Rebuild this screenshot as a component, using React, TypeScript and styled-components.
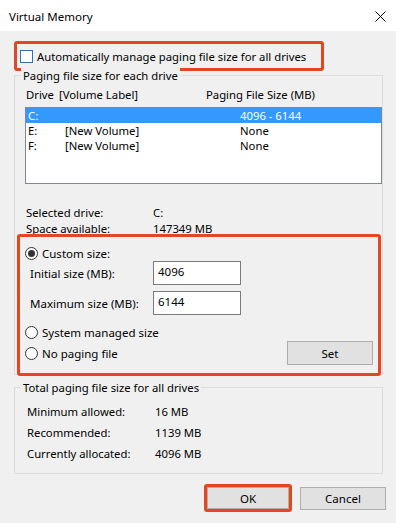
import * as React from "react";
import styled, { createGlobalStyle } from "styled-components";

const colors = {
	face: "#f0f0f0",
	frame: "#dcdcdc",
	orange: "#e4471d",
	select: "#3399ff",
	edge: "#7a7a7a",
	list: "#828790",
	button: "#e1e1e1",
	buttonEdge: "#adadad",
	check: "#2f6fb8",
};

const Global = createGlobalStyle`
	html, body {
		margin: 0;
		padding: 0;
	}
	body {
		background: ${colors.face};
		font-family: "Noto Sans", "Open Sans", sans-serif;
		font-size: 11.3px;
		color: #000;
	}
`;

const Window = styled.div`
	width: 396px;
	height: 523px;
	background: ${colors.face};
	display: flex;
	flex-direction: column;
	overflow: hidden;
`;

const TitleBar = styled.div`
	height: 31px;
	box-sizing: border-box;
	padding: 2px 10px 0 9px;
	background: #fff;
	display: flex;
	align-items: center;
	justify-content: space-between;
	font-size: 11.5px;
`;

const Body = styled.div`
	display: flex;
	flex-direction: column;
	padding: 0 13px 0 14px;
`;

const Highlight = styled.div`
	box-sizing: border-box;
	border: 3px solid ${colors.orange};
	border-radius: 3px;
`;

const AutoBox = styled(Highlight)`
	width: 310px;
	height: 30px;
	margin-top: 10px;
	padding-left: 3px;
	display: flex;
	align-items: center;
	white-space: nowrap;
`;

const Check = styled.span`
	width: 13px;
	height: 13px;
	box-sizing: border-box;
	border: 1px solid ${colors.check};
	background: #fff;
	margin-right: 4px;
	flex-shrink: 0;
`;

const Group = styled.div<{ $top: number }>`
	margin-top: ${(p) => p.$top}px;
	border: 1px solid ${colors.frame};
	display: flex;
	flex-direction: column;
`;

const GroupTitle = styled.span`
	align-self: flex-start;
	margin: -8px 0 0 6px;
	padding: 0 2px;
	line-height: 16px;
	background: ${colors.face};
`;

const Header = styled.div`
	display: grid;
	grid-template-columns: 33px 147px auto;
	margin-top: 3px;
	padding-left: 11px;
	line-height: 16px;
	white-space: nowrap;
`;

const ListBox = styled.div`
	margin: 4px 0 0 10px;
	height: 77px;
	box-sizing: border-box;
	border: 1px solid ${colors.list};
	background: #fff;
`;

const DriveRow = styled.div<{ $selected?: boolean }>`
	display: grid;
	grid-template-columns: 37px 175px auto;
	height: 15px;
	line-height: 15px;
	padding-left: 2px;
	background: ${(p) => (p.$selected ? colors.select : "transparent")};
	color: ${(p) => (p.$selected ? "#fff" : "#000")};
`;

const InfoGrid = styled.div<{ $top: number; $left: number; $col: number; $row: number; $bottom?: number }>`
	display: grid;
	grid-template-columns: ${(p) => p.$col}px auto;
	grid-auto-rows: ${(p) => p.$row}px;
	align-items: center;
	margin-top: ${(p) => p.$top}px;
	padding: 0 0 ${(p) => p.$bottom || 0}px ${(p) => p.$left}px;
`;

const SizeBox = styled(Highlight)`
	margin: -2px 1px -2px 2px;
	padding: 8px 5px 8px 5px;
	display: flex;
	flex-direction: column;
`;

const RadioRow = styled.label<{ $top?: number }>`
	display: flex;
	align-items: center;
	height: 16px;
	margin-top: ${(p) => p.$top || 0}px;
	font-size: 11.5px;
`;

const Radio = styled.span<{ $on?: boolean }>`
	width: 13px;
	height: 13px;
	box-sizing: border-box;
	border: 1px solid #333;
	border-radius: 50%;
	background: #fff;
	margin-right: 4px;
	display: flex;
	align-items: center;
	justify-content: center;
	&::after {
		content: "";
		width: 7px;
		height: 7px;
		border-radius: 50%;
		background: ${(p) => (p.$on ? "#333" : "transparent")};
	}
`;

const FieldRow = styled.div<{ $top?: number }>`
	display: grid;
	grid-template-columns: 123px 88px;
	align-items: center;
	padding-left: 5px;
	margin-top: ${(p) => p.$top || 0}px;
	font-size: 11.5px;
`;

const Field = styled.input`
	width: 88px;
	height: 24px;
	box-sizing: border-box;
	border: 1px solid ${colors.edge};
	background: #fff;
	padding: 0 0 4px 4px;
	font: inherit;
	color: #000;
	outline: none;
`;

const LastRow = styled.div`
	display: flex;
	align-items: center;
	justify-content: space-between;
	margin-top: 1px;
	height: 24px;
`;

const Button = styled.button<{ $w: number; $h: number }>`
	width: ${(p) => p.$w}px;
	height: ${(p) => p.$h}px;
	box-sizing: border-box;
	border: 1px solid ${colors.buttonEdge};
	background: ${colors.button};
	font-family: inherit;
	font-size: 11.5px;
	font-weight: 400;
	color: #000;
	padding: 0;
`;

const Footer = styled.div`
	display: flex;
	justify-content: flex-end;
	align-items: center;
	gap: 8px;
	margin-top: 10px;
	padding-right: 10px;
`;

const OkBox = styled(Highlight)`
	width: 88px;
	height: 28px;
	display: flex;
`;

const drives = [
	{ letter: "C:", label: "", size: "4096 - 6144", selected: true },
	{ letter: "E:", label: "[New Volume]", size: "None" },
	{ letter: "F:", label: "[New Volume]", size: "None" },
];

function CloseIcon() {
	return (
		<svg width="11" height="11" viewBox="0 0 11 11">
			<path d="M0.5 0.5 L10.5 10.5 M10.5 0.5 L0.5 10.5" stroke="#000" strokeWidth="1" fill="none" />
		</svg>
	);
}

export default function App() {
	return (
		<Window>
			<Global />
			<TitleBar>
				<span>Virtual Memory</span>
				<CloseIcon />
			</TitleBar>
			<Body>
				<AutoBox>
					<Check />
					<span>Automatically manage paging file size for all drives</span>
				</AutoBox>

				<Group $top={4}>
					<GroupTitle>Paging file size for each drive</GroupTitle>
					<Header>
						<span>Drive</span>
						<span>[Volume Label]</span>
						<span>Paging File Size (MB)</span>
					</Header>
					<ListBox>
						{drives.map((d) => (
							<DriveRow key={d.letter} $selected={d.selected}>
								<span>{d.letter}</span>
								<span>{d.label}</span>
								<span>{d.size}</span>
							</DriveRow>
						))}
					</ListBox>
					<InfoGrid $top={20} $left={11} $col={127} $row={16}>
						<span>Selected drive:</span>
						<span>C:</span>
						<span>Space available:</span>
						<span>147349 MB</span>
					</InfoGrid>
					<SizeBox>
						<RadioRow>
							<Radio $on />
							<span>Custom size:</span>
						</RadioRow>
						<FieldRow>
							<span>Initial size (MB):</span>
							<Field defaultValue="4096" />
						</FieldRow>
						<FieldRow $top={6}>
							<span>Maximum size (MB):</span>
							<Field defaultValue="6144" />
						</FieldRow>
						<RadioRow $top={9}>
							<Radio />
							<span>System managed size</span>
						</RadioRow>
						<LastRow>
							<RadioRow>
								<Radio />
								<span>No paging file</span>
							</RadioRow>
							<Button $w={86} $h={24}>Set</Button>
						</LastRow>
					</SizeBox>
				</Group>

				<Group $top={12}>
					<GroupTitle>Total paging file size for all drives</GroupTitle>
					<InfoGrid $top={5} $left={12} $col={128} $row={21} $bottom={9}>
						<span>Minimum allowed:</span>
						<span>16 MB</span>
						<span>Recommended:</span>
						<span>1139 MB</span>
						<span>Currently allocated:</span>
						<span>4096 MB</span>
					</InfoGrid>
				</Group>
			</Body>
			<Footer>
				<OkBox>
					<Button $w={82} $h={22}>OK</Button>
				</OkBox>
				<Button $w={86} $h={23}>Cancel</Button>
			</Footer>
		</Window>
	);
}
